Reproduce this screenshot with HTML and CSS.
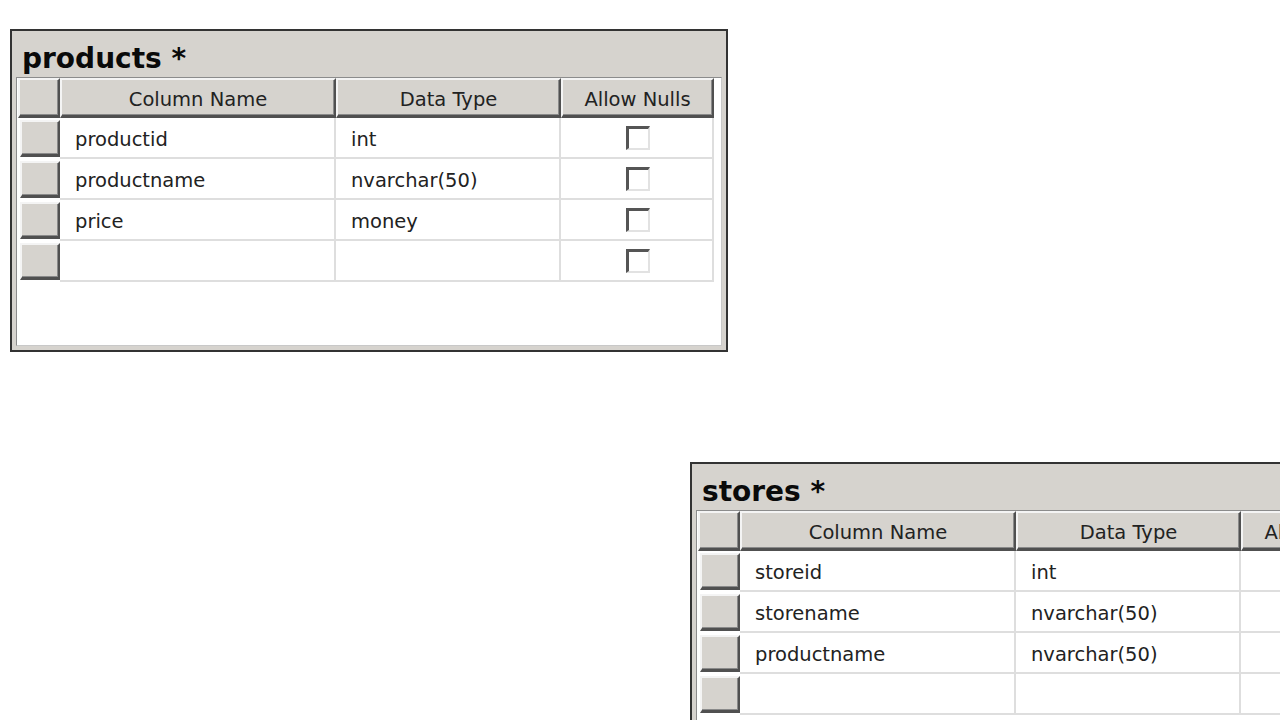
FILE: index.html
```html
<!DOCTYPE html>
<html>
<head>
<meta charset="utf-8">
<link rel="stylesheet" href="styles.css">
</head>
<body>
<div class="canvas">
  <div class="win win-products">
    <div class="title">products *</div>
    <div class="pane">
      <div class="grid">
        <div class="hcell sel"></div>
        <div class="hcell">Column Name</div>
        <div class="hcell">Data Type</div>
        <div class="hcell">Allow Nulls</div>

        <div class="rsel"><span class="btn"></span></div>
        <div class="cell">productid</div>
        <div class="cell">int</div>
        <div class="cell chk"><span class="box"></span></div>

        <div class="rsel"><span class="btn"></span></div>
        <div class="cell">productname</div>
        <div class="cell">nvarchar(50)</div>
        <div class="cell chk"><span class="box"></span></div>

        <div class="rsel"><span class="btn"></span></div>
        <div class="cell">price</div>
        <div class="cell">money</div>
        <div class="cell chk"><span class="box"></span></div>

        <div class="rsel"><span class="btn"></span></div>
        <div class="cell"></div>
        <div class="cell"></div>
        <div class="cell chk"><span class="box"></span></div>
      </div>
    </div>
  </div>

  <div class="win win-stores">
    <div class="title">stores *</div>
    <div class="pane">
      <div class="grid">
        <div class="hcell sel"></div>
        <div class="hcell">Column Name</div>
        <div class="hcell">Data Type</div>
        <div class="hcell">Allow Nulls</div>

        <div class="rsel"><span class="btn"></span></div>
        <div class="cell">storeid</div>
        <div class="cell">int</div>
        <div class="cell chk"><span class="box"></span></div>

        <div class="rsel"><span class="btn"></span></div>
        <div class="cell">storename</div>
        <div class="cell">nvarchar(50)</div>
        <div class="cell chk"><span class="box"></span></div>

        <div class="rsel"><span class="btn"></span></div>
        <div class="cell">productname</div>
        <div class="cell">nvarchar(50)</div>
        <div class="cell chk"><span class="box"></span></div>

        <div class="rsel"><span class="btn"></span></div>
        <div class="cell"></div>
        <div class="cell"></div>
        <div class="cell chk"><span class="box"></span></div>
      </div>
    </div>
  </div>
</div>
</body>
</html>
```

FILE: styles.css
```css
html, body {
  margin: 0;
  padding: 0;
  background: #ffffff;
  overflow: hidden;
}

.canvas {
  position: relative;
  width: 1280px;
  height: 720px;
  overflow: hidden;
  font-family: "DejaVu Sans", "Liberation Sans", sans-serif;
}

.win {
  position: absolute;
  box-sizing: border-box;
  width: 718px;
  height: 323px;
  border: 2px solid #333333;
  background: #d6d3ce;
  display: flex;
  flex-direction: column;
}

.win-products {
  left: 10px;
  top: 29px;
}

.win-stores {
  left: 690px;
  top: 462px;
}

.title {
  box-sizing: border-box;
  height: 46px;
  padding: 14px 0 0 10px;
  font-size: 28px;
  font-weight: bold;
  line-height: 1;
  color: #0a0a0a;
}

.pane {
  flex: 1;
  margin: 0 4px 4px 4px;
  background: #ffffff;
  border-top: 1px solid #8c8c8c;
  border-left: 1px solid #8c8c8c;
  border-right: 1px solid #c8c8c8;
  border-bottom: 1px solid #c8c8c8;
  padding: 0 0 0 1px;
}

.grid {
  display: grid;
  grid-template-columns: 42px 276px 225px 153px;
  grid-template-rows: 40px repeat(4, 41px);
  font-size: 19.5px;
  color: #222222;
}

.hcell {
  box-sizing: border-box;
  display: flex;
  align-items: center;
  justify-content: center;
  background: #d6d3ce;
  border-top: 2px solid #f4f4f4;
  border-left: 2px solid #f4f4f4;
  border-right: 2px solid #505050;
  border-bottom: 3px solid #505050;
  box-shadow: inset -1px -1px 0 #8a8a8a;
  padding-top: 3px;
}

.rsel {
  box-sizing: border-box;
  padding: 2px 0 2px 2px;
  display: flex;
}

.btn {
  flex: 1;
  box-sizing: border-box;
  background: #d6d3ce;
  border-top: 2px solid #f4f4f4;
  border-left: 2px solid #f4f4f4;
  border-right: 2px solid #505050;
  border-bottom: 3px solid #505050;
  box-shadow: inset -1px -1px 0 #8a8a8a;
}

.cell {
  box-sizing: border-box;
  display: flex;
  align-items: center;
  padding-left: 15px;
  padding-top: 3px;
  border-right: 2px solid #dedede;
  border-bottom: 2px solid #dedede;
  white-space: nowrap;
}

.cell.chk {
  justify-content: center;
  padding-left: 2px;
  padding-top: 0;
}

.box {
  box-sizing: border-box;
  width: 24px;
  height: 24px;
  background: #ffffff;
  border-top: 3px solid #555555;
  border-left: 3px solid #555555;
  border-right: 2px solid #e2e2e2;
  border-bottom: 2px solid #e2e2e2;
}

.win-stores .cell.chk .box {
  display: none;
}
```
